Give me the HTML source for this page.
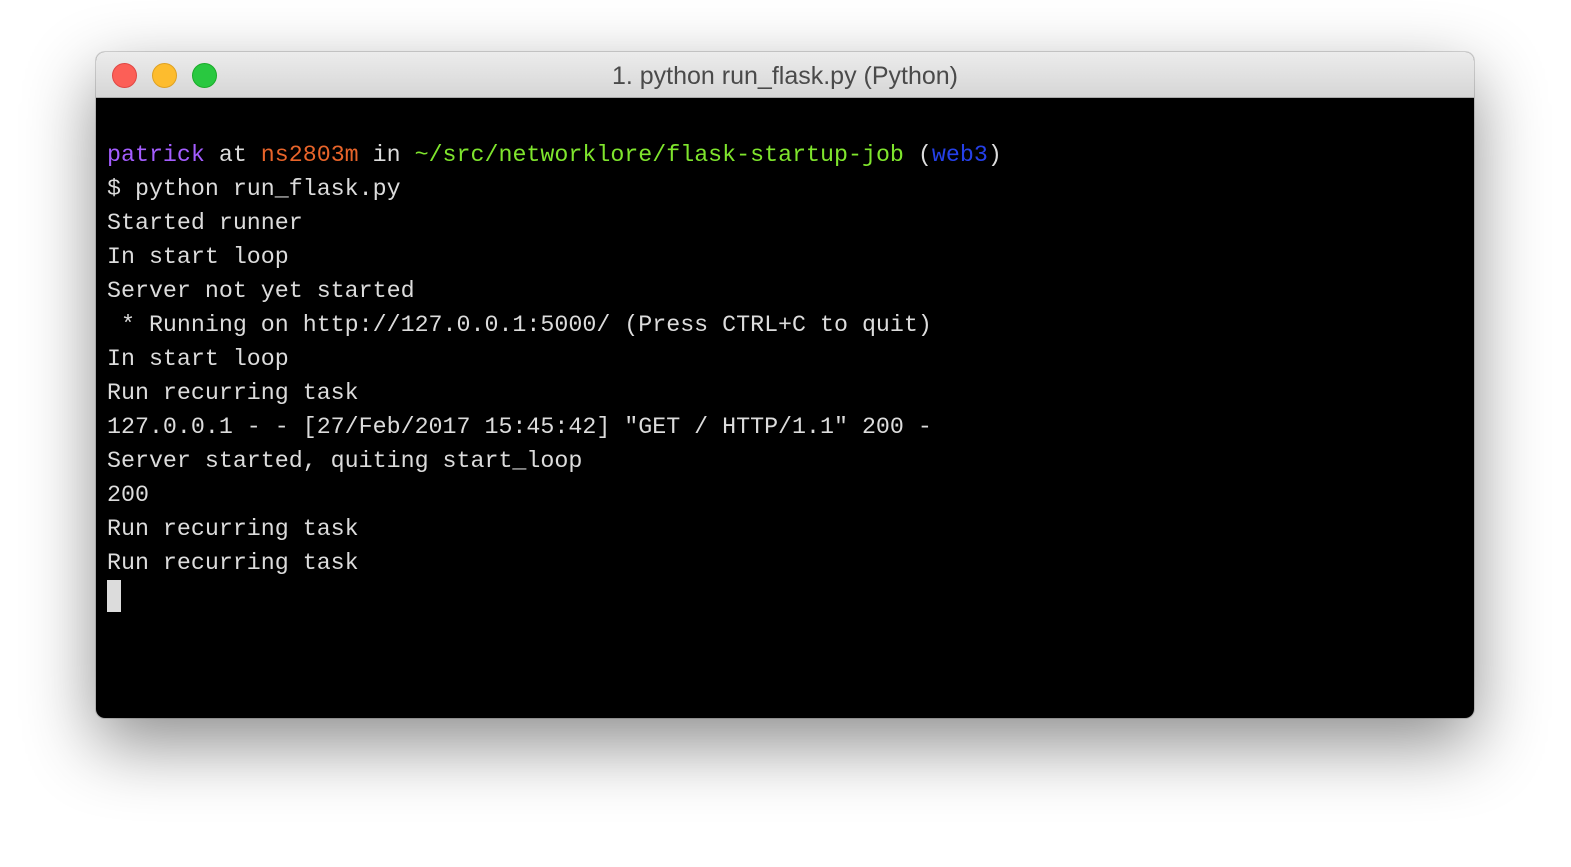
<!DOCTYPE html>
<html><head><style>
html,body{margin:0;padding:0;width:1571px;height:867px;background:#fff;overflow:hidden}
.win{position:absolute;left:96px;top:52px;width:1378px;height:666px;border-radius:9px;overflow:hidden;box-shadow:0 26px 70px rgba(0,0,0,0.45),0 0 0 1px rgba(0,0,0,0.15);background:#000}
.tb{position:absolute;left:0;top:0;width:100%;height:45px;background:linear-gradient(#ececec,#d6d6d6);border-bottom:1px solid #aaa;text-align:center;font:25px "Liberation Sans",sans-serif;color:#4a4a4a;line-height:49px}
.b{position:absolute;top:11px;width:23px;height:23px;border-radius:50%}
.term{position:absolute;left:11px;top:86px;font:23.3px "Liberation Mono",monospace;color:#dcdcdc;line-height:34px;white-space:pre}
.cur{display:inline-block;width:14px;height:32px;background:#dcdcdc;vertical-align:-8px}
</style></head><body>
<div class="win">
<div class="tb">1. python run_flask.py (Python)
<div class="b" style="left:16px;background:#fc5f57;border:1px solid #df4744"></div>
<div class="b" style="left:56px;background:#fdbc2e;border:1px solid #dea123"></div>
<div class="b" style="left:96px;background:#29c840;border:1px solid #1aab29"></div>
</div>
<div class="term"><span style="color:#a45dff">patrick</span> at <span style="color:#e8642a">ns2803m</span> in <span style="color:#7fe52d">~/src/networklore/flask-startup-job</span> (<span style="color:#2540e8">web3</span>)
$ python run_flask.py
Started runner
In start loop
Server not yet started
 * Running on http://127.0.0.1:5000/ (Press CTRL+C to quit)
In start loop
Run recurring task
127.0.0.1 - - [27/Feb/2017 15:45:42] "GET / HTTP/1.1" 200 -
Server started, quiting start_loop
200
Run recurring task
Run recurring task
<span class="cur"></span></div>
</div>
</body></html>
